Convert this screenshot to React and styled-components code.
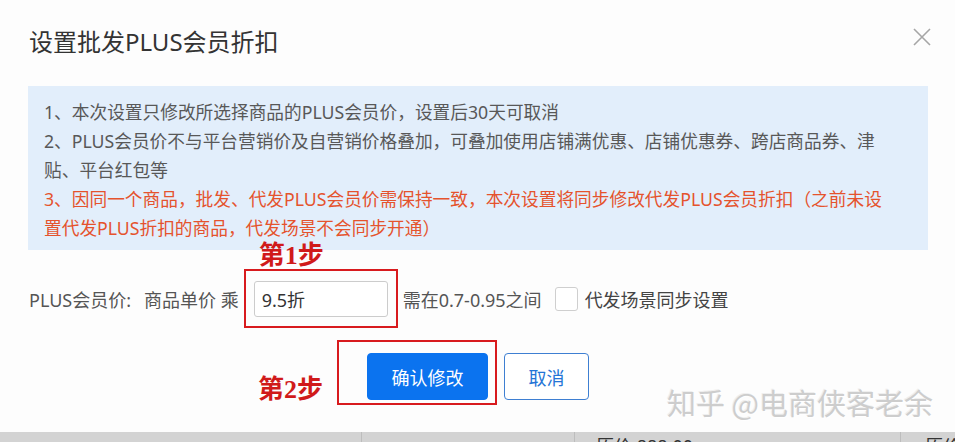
import React from "react";
import styled, { createGlobalStyle } from "styled-components";

const Global = createGlobalStyle`
  html, body { margin: 0; padding: 0; background: #ffffff; }
  body { font-family: "Noto Sans", "Noto Sans CJK SC", sans-serif; }
  * { box-sizing: border-box; }
`;

const Page = styled.div`
  width: 955px;
  height: 442px;
  overflow: hidden;
  display: flex;
  flex-direction: column;
`;

const Dialog = styled.div`
  position: relative;
  height: 432px;
  flex: none;
  background: #fdfdfd;
`;

const Header = styled.div`
  height: 86px;
  padding: 26px 24px 0 29px;
  display: flex;
  justify-content: space-between;
  align-items: flex-start;
`;

const Title = styled.h2`
  margin: 0;
  font-size: 24px;
  line-height: 32px;
  font-weight: 400;
  color: #333333;
`;

const Close = styled.button`
  margin-top: 2px;
  width: 18px;
  height: 18px;
  padding: 0;
  border: none;
  background: none;
  display: flex;
  color: #a6a6a6;
`;

const Notice = styled.div`
  margin: 0 27px 0 28px;
  height: 164px;
  padding: 12px 20px 7px 16px;
  background: #e2eefb;
`;

const NoticeLine = styled.p`
  margin: 0;
  font-size: 17.7px;
  line-height: 29px;
  white-space: nowrap;
  color: ${(p) => (p.$warn ? "#e5532d" : "#585858")};
`;

const FormRow = styled.div`
  margin-top: 31px;
  padding-left: 29px;
  height: 36px;
  display: flex;
  align-items: center;
  gap: 15px;
  font-size: 18px;
  color: #555555;
`;

const Label = styled.span`
  width: 100px;
  white-space: nowrap;
`;

const Plain = styled.span`
  white-space: nowrap;
`;

const Annotated = styled.div`
  position: relative;
  display: flex;
`;

const Mark = styled.span`
  position: absolute;
  top: ${(p) => p.$t}px;
  left: ${(p) => p.$l}px;
  right: ${(p) => p.$r}px;
  bottom: ${(p) => p.$b}px;
  border: 2px solid #d81b1e;
  pointer-events: none;
`;

const StepTag = styled.span`
  position: absolute;
  top: ${(p) => p.$t}px;
  left: ${(p) => p.$l}px;
  font-family: "Liberation Serif", "Noto Sans CJK SC", serif;
  font-weight: 700;
  font-size: 26px;
  line-height: 26px;
  color: #d01a1a;
  white-space: nowrap;
`;

const Input = styled.input`
  width: 134px;
  height: 36px;
  border: 1px solid #cccccc;
  border-radius: 3px;
  padding: 0 0 0 7px;
  font-family: "Noto Sans", "Noto Sans CJK SC", sans-serif;
  font-size: 18px;
  color: #333333;
  background: #ffffff;
  outline: none;
`;

const Check = styled.label`
  display: flex;
  align-items: center;
  gap: 7px;
  margin-left: -2px;
  white-space: nowrap;
  color: #444444;
`;

const Box = styled.span`
  width: 23px;
  height: 24px;
  border: 1px solid #cfcfcf;
  border-radius: 3px;
  background: #ffffff;
`;

const Actions = styled.div`
  margin-top: 36px;
  display: flex;
  justify-content: center;
  gap: 16px;
  padding-left: 1px;
`;

const Button = styled.button`
  height: 47px;
  width: ${(p) => (p.$primary ? 121 : 85)}px;
  border-radius: 4px;
  border: 1px solid ${(p) => (p.$primary ? "#0b73ef" : "#3e7fd2")};
  background: ${(p) => (p.$primary ? "#0b73ef" : "#ffffff")};
  color: ${(p) => (p.$primary ? "#ffffff" : "#2474d6")};
  font-family: "Noto Sans CJK SC", sans-serif;
  font-size: 18px;
  padding: 0;
`;

const Watermark = styled.span`
  position: absolute;
  right: 22px;
  top: 385px;
  font-family: "Noto Sans CJK SC", sans-serif;
  font-size: 29px;
  line-height: 34px;
  color: #cdcdcd;
  text-shadow: 1px 1px 0 #ffffff, -1px -1px 0 #efefef;
  pointer-events: none;
  white-space: nowrap;
`;

const TableStrip = styled.div`
  height: 10px;
  flex: none;
  display: grid;
  grid-template-columns: 361px 213px 326px 1fr;
  background: #d3d3d3;
  overflow: hidden;
`;

const Cell = styled.div`
  border-left: ${(p) => (p.$first ? "none" : "1px solid #bdbdbd")};
  padding: 3px 0 0 ${(p) => p.$pad || 0}px;
  font-size: 18px;
  line-height: 22px;
  color: #333333;
  white-space: nowrap;
`;

export default function App() {
  return (
    <>
      <Global />
      <Page>
        <Dialog>
          <Header>
            <Title>设置批发PLUS会员折扣</Title>
            <Close aria-label="关闭">
              <svg width="18" height="18" viewBox="0 0 18 18">
                <path d="M1 1 L17 17 M17 1 L1 17" stroke="currentColor" strokeWidth="1.6" fill="none" />
              </svg>
            </Close>
          </Header>
          <Notice>
            <NoticeLine>1、本次设置只修改所选择商品的PLUS会员价，设置后30天可取消</NoticeLine>
            <NoticeLine>
              2、PLUS会员价不与平台营销价及自营销价格叠加，可叠加使用店铺满优惠、店铺优惠券、跨店商品券、津
              <br />
              贴、平台红包等
            </NoticeLine>
            <NoticeLine $warn>
              3、因同一个商品，批发、代发PLUS会员价需保持一致，本次设置将同步修改代发PLUS会员折扣（之前未设
              <br />
              置代发PLUS折扣的商品，代发场景不会同步开通）
            </NoticeLine>
          </Notice>
          <FormRow>
            <Label>PLUS会员价:</Label>
            <Plain>商品单价 乘</Plain>
            <Annotated>
              <Input defaultValue="9.5折" />
              <Mark $t={-12} $l={-10} $r={-10} $b={-11} />
              <StepTag $t={-38} $l={5}>第1步</StepTag>
            </Annotated>
            <Plain>需在0.7-0.95之间</Plain>
            <Check>
              <Box />
              <span>代发场景同步设置</span>
            </Check>
          </FormRow>
          <Actions>
            <Annotated>
              <Button $primary>确认修改</Button>
              <Mark $t={-13} $l={-30} $r={-9} $b={-5} />
              <StepTag $t={24} $l={-109}>第2步</StepTag>
            </Annotated>
            <Button>取消</Button>
          </Actions>
          <Watermark>知乎 @电商侠客老余</Watermark>
        </Dialog>
        <TableStrip>
          <Cell $first />
          <Cell />
          <Cell $pad={21}>原价 888.00</Cell>
          <Cell $pad={24}>原价</Cell>
        </TableStrip>
      </Page>
    </>
  );
}
